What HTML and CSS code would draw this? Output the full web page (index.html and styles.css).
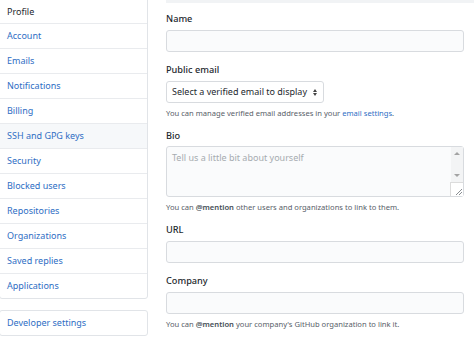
FILE: index.html
```html
<!DOCTYPE html>
<html>
<head>
<meta charset="utf-8">
<link rel="stylesheet" href="styles.css">
</head>
<body>
<div class="page">
  <nav class="side">
    <ul class="menu">
      <li class="item selected">Profile</li>
      <li class="item">Account</li>
      <li class="item">Emails</li>
      <li class="item">Notifications</li>
      <li class="item">Billing</li>
      <li class="item hover">SSH and GPG keys</li>
      <li class="item">Security</li>
      <li class="item">Blocked users</li>
      <li class="item">Repositories</li>
      <li class="item">Organizations</li>
      <li class="item">Saved replies</li>
      <li class="item">Applications</li>
    </ul>
    <ul class="menu dev">
      <li class="item">Developer settings</li>
    </ul>
  </nav>
  <main class="main">
    <div class="topbar"></div>
    <div class="label l-name">Name</div>
    <div class="input"></div>
    <div class="label l-email">Public email</div>
    <div class="select">Select a verified email to display <span class="caret"><span class="up"></span><span class="down"></span></span></div>
    <div class="note">You can manage verified email addresses in your <span class="link">email settings</span>.</div>
    <div class="label l-bio">Bio</div>
    <div class="textarea">
      <div class="placeholder">Tell us a little bit about yourself</div>
      <div class="scroll">
        <span class="arr-up"></span>
        <span class="arr-down"></span>
        <span class="grip">
          <svg width="11" height="11" viewBox="0 0 11 11"><path d="M10 4 L4 10 M10 7 L7 10" stroke="#8a8e92" stroke-width="1" fill="none"/></svg>
        </span>
      </div>
    </div>
    <div class="note">You can <b>@mention</b> other users and organizations to link to them.</div>
    <div class="label l-url">URL</div>
    <div class="input"></div>
    <div class="label l-company">Company</div>
    <div class="input"></div>
    <div class="note">You can <b>@mention</b> your company's GitHub organization to link it.</div>
  </main>
</div>
</body>
</html>
```
FILE: styles.css
```css
html, body {
  margin: 0;
  padding: 0;
  background: #fff;
}
body {
  font-family: "Noto Sans", "Open Sans", sans-serif;
  color: #24292e;
  width: 474px;
  height: 338px;
  overflow: hidden;
}
.page {
  display: flex;
  align-items: flex-start;
}
.side {
  width: 149px;
  margin-left: -1px;
  margin-top: -3px;
  flex: none;
}
.menu {
  list-style: none;
  margin: 0;
  padding: 0;
  border: 1px solid #e1e4e8;
  border-radius: 3px;
}
.menu.dev {
  margin-top: 11px;
}
.item {
  height: 24px;
  line-height: 24px;
  padding-left: 7px;
  font-size: 9px;
  color: #2e6ec4;
  border-top: 1px solid #e9ebee;
  white-space: nowrap;
}
.item:first-child {
  border-top: none;
}
.item.selected {
  color: #24292e;
  height: 25px;
  line-height: 27px;
}
.item.hover {
  background: #f6f8fa;
}
.main {
  margin-left: 18px;
  width: 298px;
  flex: none;
}
.topbar {
  height: 3px;
  background: #f1f3f5;
  margin-right: -20px;
}
.label {
  font-size: 9.2px;
  font-weight: 500;
  line-height: 14px;
  color: #24292e;
}
.l-name { margin-top: 9px; }
.l-email { margin-top: 11px; }
.l-bio { margin-top: 10px; }
.l-url { margin-top: 10px; }
.l-company { margin-top: 11px; }
.input {
  margin-top: 4px;
  height: 20px;
  border: 1px solid #d8dbdf;
  border-radius: 3px;
  background: #fafbfc;
}
.select {
  margin-top: 4px;
  width: 151px;
  height: 20px;
  line-height: 20px;
  box-sizing: content-box;
  border: 1px solid #d8dbdf;
  border-radius: 3px;
  background: #fff;
  font-size: 9px;
  padding-left: 5px;
  white-space: nowrap;
  display: flex;
  align-items: center;
  gap: 6px;
}
.caret {
  display: inline-flex;
  flex-direction: column;
  gap: 1px;
}
.up, .down {
  width: 0;
  height: 0;
  border-left: 2.5px solid transparent;
  border-right: 2.5px solid transparent;
}
.up { border-bottom: 3px solid #444; }
.down { border-top: 3px solid #444; }
.note {
  margin-top: 4px;
  font-size: 7.6px;
  line-height: 12px;
  color: #586069;
  white-space: nowrap;
}
.note b {
  font-weight: 600;
  color: #444d56;
}
.link {
  color: #2e6ec4;
}
.textarea {
  margin-top: 3px;
  height: 49px;
  border: 1px solid #d8dbdf;
  border-radius: 3px;
  background: #fafbfc;
  display: flex;
}
.placeholder {
  flex: 1;
  font-size: 9px;
  color: #a6abb0;
  padding: 4px 0 0 5px;
  line-height: 14px;
}
.scroll {
  width: 12px;
  display: flex;
  flex-direction: column;
  align-items: center;
  background: #f3f4f5;
}
.arr-up, .arr-down {
  width: 0;
  height: 0;
  border-left: 3px solid transparent;
  border-right: 3px solid transparent;
}
.arr-up {
  margin-top: 5px;
  border-bottom: 3px solid #a3a3a3;
}
.arr-down {
  margin-top: 19px;
  border-top: 3px solid #a3a3a3;
}
.grip {
  margin-top: 5px;
  width: 12px;
  height: 13px;
  border-top: 1px solid #dcdcdc;
  border-left: 1px solid #dcdcdc;
  background: #fff;
  display: flex;
  align-items: flex-end;
  justify-content: flex-end;
  margin-left: -1px;
}
.grip svg { display: block; }
```
